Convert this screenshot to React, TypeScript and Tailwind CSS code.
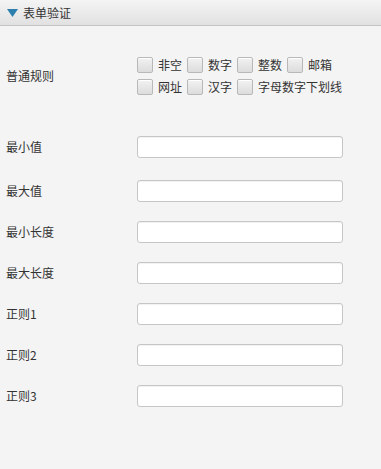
import React from 'react';

const font = { fontFamily: '"Noto Sans CJK SC", "Noto Sans", sans-serif' };

function Check({ label }: { label: string }) {
  return (
    <label className="flex items-center h-[16px] mr-[5px]">
      <span className="w-[16px] h-[16px] rounded-[2px] border border-[#b8b8b8] bg-gradient-to-b from-[#f2f2f2] to-[#dcdcdc] shadow-[inset_0_1px_0_#fff]" />
      <span className="ml-[5px] text-[12px] leading-[16px] text-[#333]">{label}</span>
    </label>
  );
}

function Field({ label, className }: { label: string; className?: string }) {
  return (
    <div className={'flex items-center h-[22px] ' + (className || '')}>
      <span className="w-[131px] text-[12px] text-[#333]">{label}</span>
      <div className="w-[206px] h-[22px] bg-white border border-[#c6c6c6] rounded-[3px] shadow-[inset_0_1px_1px_rgba(0,0,0,0.06)]" />
    </div>
  );
}

export default function App() {
  return (
    <div className="w-[381px] h-[469px] bg-[#f4f4f4] overflow-hidden" style={font}>
      <div className="h-[26px] flex items-center bg-gradient-to-b from-[#f4f4f4] to-[#e1e1e1] border-b border-[#c4c4c4] pl-[7px]">
        <svg width="11" height="8" viewBox="0 0 11 8" className="mt-[1px]">
          <polygon points="0,0 11,0 5.5,8" fill="#2d7fae" />
        </svg>
        <span className="ml-[5px] text-[12px] text-[#333]">表单验证</span>
      </div>
      <div className="pl-[6px]">
        <div className="flex items-center mt-[31px]">
          <span className="w-[131px] text-[12px] text-[#333]">普通规则</span>
          <div className="flex flex-col gap-[6px]">
            <div className="flex">
              <Check label="非空" />
              <Check label="数字" />
              <Check label="整数" />
              <Check label="邮箱" />
            </div>
            <div className="flex">
              <Check label="网址" />
              <Check label="汉字" />
              <Check label="字母数字下划线" />
            </div>
          </div>
        </div>
        <Field label="最小值" className="mt-[41px]" />
        <Field label="最大值" className="mt-[22px]" />
        <Field label="最小长度" className="mt-[19px]" />
        <Field label="最大长度" className="mt-[19px]" />
        <Field label="正则1" className="mt-[19px]" />
        <Field label="正则2" className="mt-[19px]" />
        <Field label="正则3" className="mt-[19px]" />
      </div>
    </div>
  );
}
